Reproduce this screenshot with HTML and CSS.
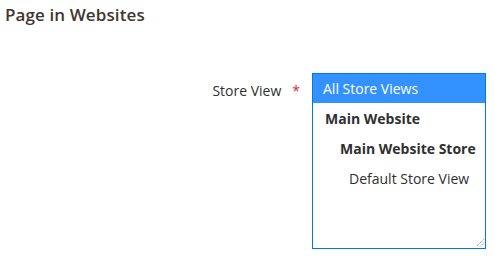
FILE: index.html
```html
<!DOCTYPE html>
<html>
<head>
<meta charset="utf-8">
<link rel="stylesheet" href="styles.css">
</head>
<body>
<div class="page">
  <h2 class="legend">Page in Websites</h2>
  <div class="field">
    <div class="label"><span>Store View</span><span class="req">*</span></div>
    <div class="select">
      <div class="opt selected">All Store Views</div>
      <div class="opt group">Main Website</div>
      <div class="opt group sub">Main Website Store</div>
      <div class="opt view">Default Store View</div>
      <svg class="grip" width="9" height="9" viewBox="0 0 9 9"><path d="M8.5 1.5 L1.5 8.5 M8.5 5 L5 8.5" stroke="#777" stroke-width="1" stroke-dasharray="1 1"/></svg>
    </div>
  </div>
</div>
</body>
</html>
```
FILE: styles.css
```css
html, body { margin: 0; padding: 0; background: #fff; }
body { font-family: "Open Sans", "DejaVu Sans", sans-serif; color: #303030; }
.page { width: 495px; height: 278px; }
.legend { margin: 0; padding: 4px 0 0 5px; font-size: 17px; font-weight: 600; color: #41362f; line-height: 22px; letter-spacing: 0.1px; }
.field { display: flex; margin-top: 47px; }
.label { width: 312px; display: flex; justify-content: flex-end; align-items: baseline; padding-top: 8px; font-size: 14px; color: #303030; }
.req { color: #e22626; margin-left: 11px; margin-right: 12px; font-size: 14px; }
.select { position: relative; box-sizing: border-box; width: 174px; height: 176px; border: 1px solid #007bdb; font-size: 14px; }
.opt { height: 30px; line-height: 31px; padding-left: 10px; white-space: nowrap; }
.selected { background: #3392ff; color: #fff; height: 29px; line-height: 30px; }
.group { font-weight: 700; padding-left: 12px; }
.sub { padding-left: 27px; }
.view { padding-left: 36px; }
.grip { position: absolute; right: 1px; bottom: 1px; }
```
